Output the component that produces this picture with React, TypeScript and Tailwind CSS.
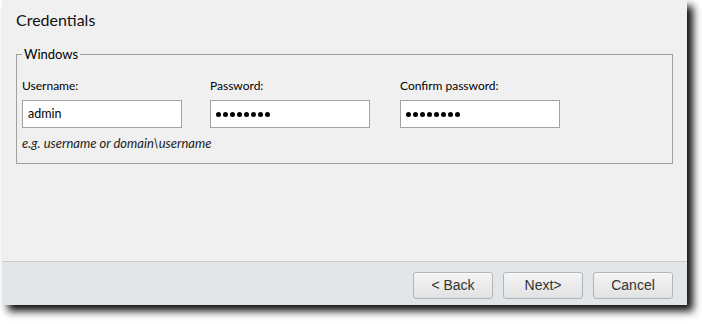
import React from "react";

const fieldFont = { fontFamily: "Lato, 'Open Sans', sans-serif" };

function Dots({ count }: { count: number }) {
  return (
    <div className="flex items-center gap-[2px]">
      {Array.from({ length: count }).map((_, i) => (
        <span key={i} className="block h-[5px] w-[5px] rounded-full bg-black" />
      ))}
    </div>
  );
}

function Field({ label, children }: { label: string; children: React.ReactNode }) {
  return (
    <div className="flex flex-col">
      <label className="mb-[6px] text-[12px] leading-[16px] text-black">{label}</label>
      <div className="flex h-[28px] w-[160px] items-center border border-[#a3a3a3] bg-white pl-[5px]">
        {children}
      </div>
    </div>
  );
}

function WizardButton({ children }: { children: React.ReactNode }) {
  return (
    <button
      className="h-[27px] w-[80px] rounded-[3px] border border-[#b4b4b4] bg-gradient-to-b from-[#f4f4f4] to-[#e2e2e2] text-[14px] text-[#333] shadow-[inset_0_1px_0_#fbfbfb]"
      style={{ fontFamily: "'Liberation Sans', Arial, sans-serif" }}
    >
      {children}
    </button>
  );
}

export default function App() {
  return (
    <div className="h-[324px] w-[702px] bg-white" style={fieldFont}>
      <div className="ml-[2px] flex h-[305px] w-[685px] flex-col bg-[#f0f0f0] shadow-[6px_6px_8px_rgba(0,0,0,0.95)]">
        <div className="flex-1 px-[14px]">
          <h1 className="pt-[10px] text-[16px] leading-[20px] text-[#111]">Credentials</h1>

          <fieldset className="mt-[16px] border border-[#a0a0a0] pb-[12px] pl-[5px] pt-[16px]">
            <legend className="px-[2px] text-[13px] leading-[16px] text-black">Windows</legend>

            <div className="flex">
              <div className="w-[188px]">
                <Field label="Username:">
                  <span className="text-[12.5px] text-black">admin</span>
                </Field>
              </div>
              <div className="w-[190px]">
                <Field label="Password:">
                  <Dots count={8} />
                </Field>
              </div>
              <Field label="Confirm password:">
                <Dots count={8} />
              </Field>
            </div>

            <p className="mt-[7px] text-[13px] italic leading-[16px] text-[#222]">
              e.g. username or domain\username
            </p>
          </fieldset>
        </div>

        <div className="flex h-[44px] items-start justify-end gap-[10px] border-t border-[#cbcdcf] bg-[#e3e6e8] pr-[14px] pt-[10px]">
          <WizardButton>&lt; Back</WizardButton>
          <WizardButton>Next&gt;</WizardButton>
          <WizardButton>Cancel</WizardButton>
        </div>
      </div>
    </div>
  );
}
